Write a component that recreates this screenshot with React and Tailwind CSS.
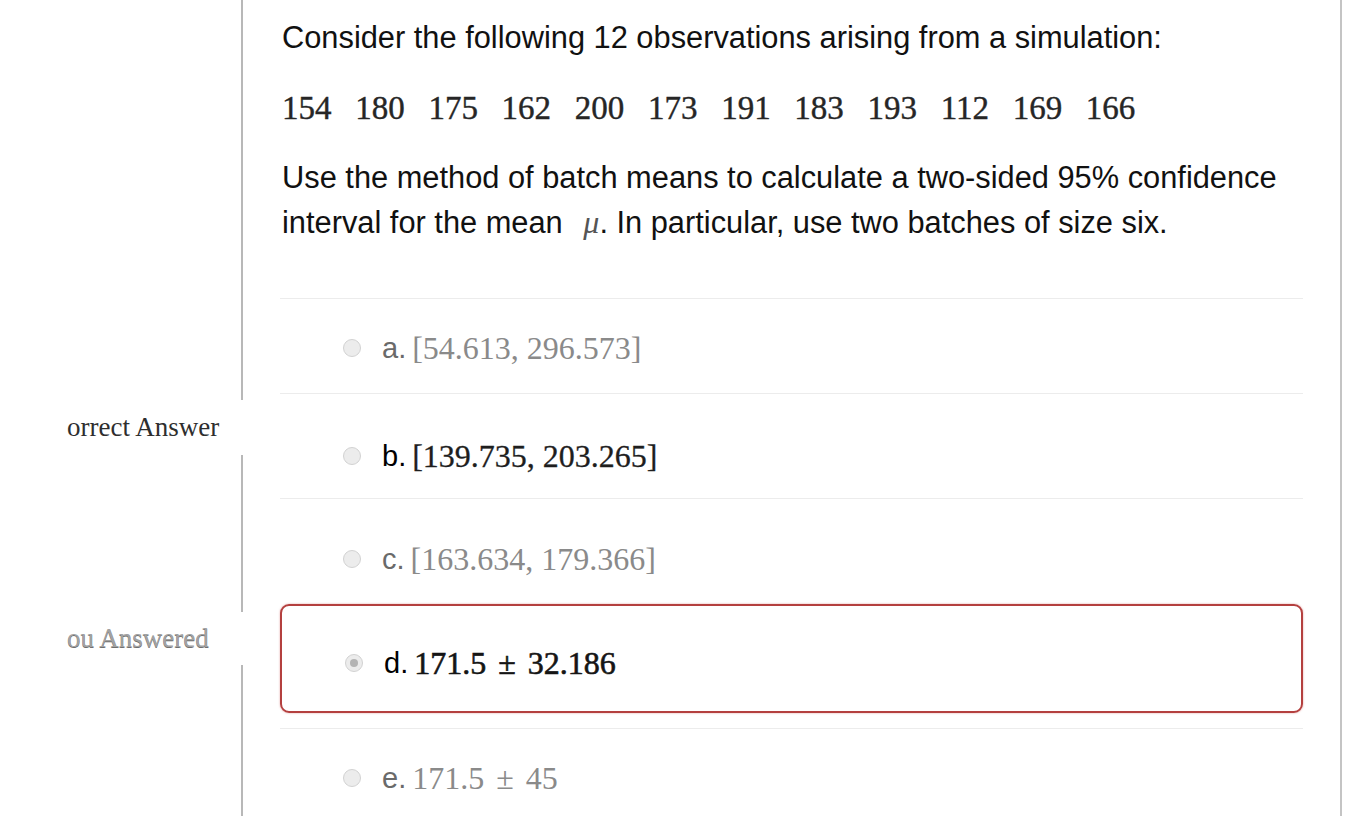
import React from 'react';

const sans = { fontFamily: '"Liberation Sans", Arial, sans-serif' };
const serif = { fontFamily: '"Liberation Serif", "Times New Roman", serif' };

const observations = [154, 180, 175, 162, 200, 173, 191, 183, 193, 112, 169, 166];

function Radio({ checked }) {
  return (
    <span className="w-[18px] h-[18px] rounded-full border border-[#d2d2d2] bg-[#ececec] flex items-center justify-center shrink-0">
      {checked && <span className="w-[8px] h-[8px] rounded-full bg-[#b4b4b4]" />}
    </span>
  );
}

function PlusMinus({ a, b }) {
  return (
    <>
      {a}
      <span className="mx-[12px]">±</span>
      {b}
    </>
  );
}

function Option({ letter, value, muted, checked, valueClass = '' }) {
  return (
    <div className="flex items-center pl-[63px] h-[40px]">
      <Radio checked={checked} />
      <span
        className={`ml-[21px] text-[29px] leading-[40px] ${muted ? 'text-[#6a6a6a]' : 'text-black'}`}
        style={sans}
      >
        {letter}.
      </span>
      <span
        className={`ml-[6px] text-[32px] leading-[40px] whitespace-pre ${muted ? 'text-[#8a8a8a]' : 'text-[#1e1e1e]'} ${valueClass}`}
        style={serif}
      >
        {value}
      </span>
    </div>
  );
}

export default function App() {
  return (
    <div className="w-[1362px] h-[816px] overflow-hidden bg-white flex">
      {/* left gutter with the answer markers */}
      <div className="w-[243px] flex flex-col shrink-0">
        <div className="h-[400px] border-r-2 border-[#b8b8b8]" />
        <div className="h-[55px] flex items-center pl-[67px]">
          <span className="text-[27px] text-[#2e2e2e] leading-none" style={serif}>orrect Answer</span>
        </div>
        <div className="h-[157px] border-r-2 border-[#b8b8b8]" />
        <div className="h-[53px] flex items-center pl-[67px]">
          <span
            className="text-[27px] text-[#a2a2a2] leading-none [text-shadow:0_1px_0_#6f6f6f]"
            style={serif}
          >
            ou Answered
          </span>
        </div>
        <div className="flex-1 border-r-2 border-[#b8b8b8]" />
      </div>

      {/* question body */}
      <div className="w-[1099px] shrink-0 border-r-2 border-[#c4c4c4] pl-[37px] pr-[37px] pt-[16px]">
        <p className="pl-[2px] text-[30.8px] leading-[44px] text-[#111]" style={sans}>
          Consider the following 12 observations arising from a simulation:
        </p>

        <div
          className="pl-[2px] mt-[26px] flex gap-[23.7px] text-[33px] leading-[44px] text-[#262626] [-webkit-text-stroke:0.4px_#262626]"
          style={serif}
        >
          {observations.map((n, i) => (
            <span key={i}>{n}</span>
          ))}
        </div>

        <p className="pl-[2px] mt-[26px] text-[30.8px] leading-[44px] text-[#111]" style={sans}>
          Use the method of batch means to calculate a two-sided 95% confidence
          <br />
          interval for the mean{' '}
          <span className="ml-[12px] italic text-[32px] text-[#555]" style={serif}>μ</span>. In particular, use two batches of size six.
        </p>

        {/* answers */}
        <div className="mt-[53px] flex flex-col">
          <div className="h-[95px] border-t border-[#ececec] pt-[29px]">
            <Option letter="a" value="[54.613, 296.573]" muted valueClass="text-[31px]" />
          </div>
          <div className="h-[105px] border-t border-[#ececec] pt-[42px]">
            <Option letter="b" value="[139.735, 203.265]" valueClass="[-webkit-text-stroke:0.3px_#1e1e1e]" />
          </div>
          <div className="h-[106px] border-t border-[#ececec] pt-[40px]">
            <Option letter="c" value="[163.634, 179.366]" muted />
          </div>
          <div className="h-[109px] border-2 border-[#b4403f] rounded-[9px] shadow-[0_0_2px_rgba(200,60,60,0.5)] pt-[37px]">
            <Option
              letter="d"
              value={<PlusMinus a="171.5" b="32.186" />}
              checked
              valueClass="text-[#151515] [-webkit-text-stroke:0.6px_#151515]"
            />
          </div>
          <div className="h-[15px]" />
          <div className="h-[100px] border-t border-[#ececec] pt-[29px]">
            <Option letter="e" value={<PlusMinus a="171.5" b="45" />} muted />
          </div>
        </div>
      </div>
    </div>
  );
}
